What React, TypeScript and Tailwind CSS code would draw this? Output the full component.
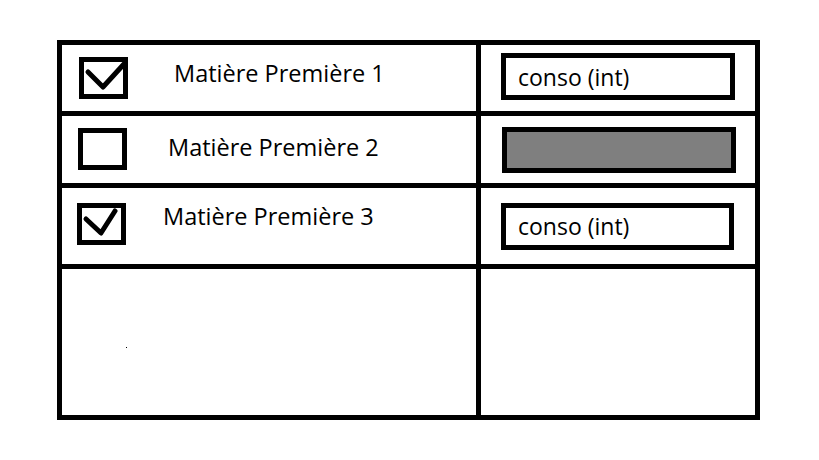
import React from 'react';

type Point = [number, number];

interface MaterialRow {
  label: string;
  checked: boolean;
  tick?: Point[];
  heightClass: string;
  boxClass: string;
  labelClass: string;
  inputClass: string;
  inputTextClass: string;
}

const rows: MaterialRow[] = [
  {
    label: 'Matière Première 1',
    checked: true,
    tick: [[9, 15], [24, 30], [45, 7]],
    heightClass: 'h-[71px]',
    boxClass: 'mt-[12px] ml-[17px]',
    labelClass: 'mt-[17px] ml-[46px]',
    inputClass: 'mt-[8px] ml-[20px] w-[234px] h-[47px] bg-white',
    inputTextClass: 'pt-[8px] pl-[12px]',
  },
  {
    label: 'Matière Première 2',
    checked: false,
    heightClass: 'h-[72px]',
    boxClass: 'mt-[12px] ml-[16px]',
    labelClass: 'mt-[20px] ml-[41px]',
    inputClass: 'mt-[11px] ml-[21px] w-[234px] h-[46px] bg-[#7f7f7f]',
    inputTextClass: '',
  },
  {
    label: 'Matière Première 3',
    checked: true,
    tick: [[9, 16], [24, 30], [38, 8]],
    heightClass: 'h-[81px]',
    boxClass: 'mt-[15px] ml-[15px]',
    labelClass: 'mt-[17px] ml-[37px]',
    inputClass: 'mt-[15px] ml-[20px] w-[233px] h-[47px] bg-white',
    inputTextClass: 'pt-[7px] pl-[12px]',
  },
];

const CheckBox: React.FC<{ checked: boolean; tick?: Point[]; className: string }> = ({ checked, tick, className }) => (
  <div className={`relative shrink-0 w-[49px] h-[42px] border-[5px] border-black bg-white ${className}`}>
    {checked && tick && (
      <svg className="absolute -left-[5px] -top-[5px] overflow-visible" width="49" height="42" viewBox="0 0 49 42">
        <polyline
          points={tick.map(p => p.join(',')).join(' ')}
          fill="none"
          stroke="#000"
          strokeWidth="5"
          strokeLinecap="round"
          strokeLinejoin="round"
        />
      </svg>
    )}
  </div>
);

const App: React.FC = () => {
  return (
    <div className="w-[819px] h-[460px] bg-white pt-[40px] pl-[57px] text-black font-['Open_Sans',sans-serif] text-[23px] leading-none">
      <div className="w-[703px] border-[5px] border-black">
        {rows.map(row => (
          <div key={row.label} className={`flex border-b-[5px] border-black ${row.heightClass}`}>
            <div className="flex items-start w-[419px] shrink-0 border-r-[5px] border-black">
              <CheckBox checked={row.checked} tick={row.tick} className={row.boxClass} />
              <span className={`whitespace-nowrap text-[23.5px] ${row.labelClass}`}>{row.label}</span>
            </div>
            <div className="flex-1">
              <div className={`border-[5px] border-black ${row.inputClass}`}>
                {row.checked && <div className={`whitespace-nowrap ${row.inputTextClass}`}>conso (int)</div>}
              </div>
            </div>
          </div>
        ))}
        {/* empty last row */}
        <div className="flex h-[146px]">
          <div className="w-[419px] shrink-0 border-r-[5px] border-black pt-[78px] pl-[64px]">
            <div className="w-px h-px bg-black" />
          </div>
          <div className="flex-1" />
        </div>
      </div>
    </div>
  );
};

export default App;
